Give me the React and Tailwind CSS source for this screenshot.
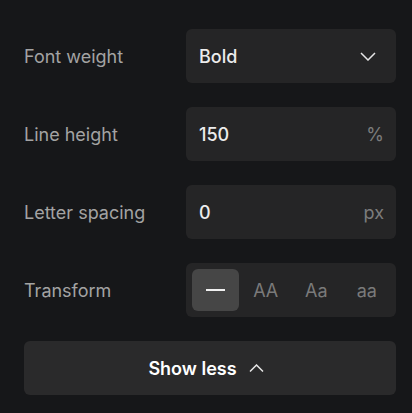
import React from 'react';

function Row({ label, children }) {
    return (
        <div className="flex items-center">
            <div className="w-[162px] text-[18px] text-[#a3a3a3]">{label}</div>
            <div className="flex-1">{children}</div>
        </div>
    );
}

function ValueBox({ value, unit }) {
    return (
        <div className="h-[54px] rounded-md bg-[#252526] flex items-center justify-between pl-[13px] pr-[12px]">
            <span className="text-[18px] font-medium text-[#ececec]">{value}</span>
            {unit && <span className="text-[18px] text-[#7c7c7c]">{unit}</span>}
        </div>
    );
}

export default function App() {
    const modes = ['AA', 'Aa', 'aa'];

    return (
        <div
            className="w-[412px] h-[413px] bg-[#161719] pl-[24px] pr-[16px] pt-[29px]"
            style={{ fontFamily: 'Inter, "Noto Sans", sans-serif' }}
        >
            <div className="flex flex-col gap-[24px]">
                <Row label="Font weight">
                    <div className="h-[54px] rounded-md bg-[#252526] flex items-center justify-between pl-[13px] pr-[20px]">
                        <span className="text-[18px] font-medium text-[#ececec]">Bold</span>
                        <svg width="16" height="9" viewBox="0 0 16 9" fill="none">
                            <path d="M1 1l7 7 7-7" stroke="#e6e6e6" strokeWidth="1.5" />
                        </svg>
                    </div>
                </Row>
                <Row label="Line height">
                    <ValueBox value="150" unit="%" />
                </Row>
                <Row label="Letter spacing">
                    <ValueBox value="0" unit="px" />
                </Row>
                <Row label="Transform">
                    <div className="h-[54px] rounded-md bg-[#252526] p-[6px] grid grid-cols-4 gap-[4px]">
                        <div className="rounded-md bg-[#464646] flex items-center justify-center">
                            <div className="w-[19px] h-[2px] bg-[#f0f0f0]"></div>
                        </div>
                        {modes.map((m) => (
                            <div key={m} className="flex items-center justify-center text-[18px] text-[#7a7a7a]">
                                {m}
                            </div>
                        ))}
                    </div>
                </Row>
                <button className="h-[54px] w-full rounded-md bg-[#2a2a2b] flex items-center justify-center gap-[12px] pr-[8px]">
                    <span className="text-[18px] font-semibold text-white">Show less</span>
                    <svg width="15" height="8" viewBox="0 0 15 8" fill="none">
                        <path d="M1 7.5l6.5-6.5 6.5 6.5" stroke="#e6e6e6" strokeWidth="1.5" />
                    </svg>
                </button>
            </div>
        </div>
    );
}
